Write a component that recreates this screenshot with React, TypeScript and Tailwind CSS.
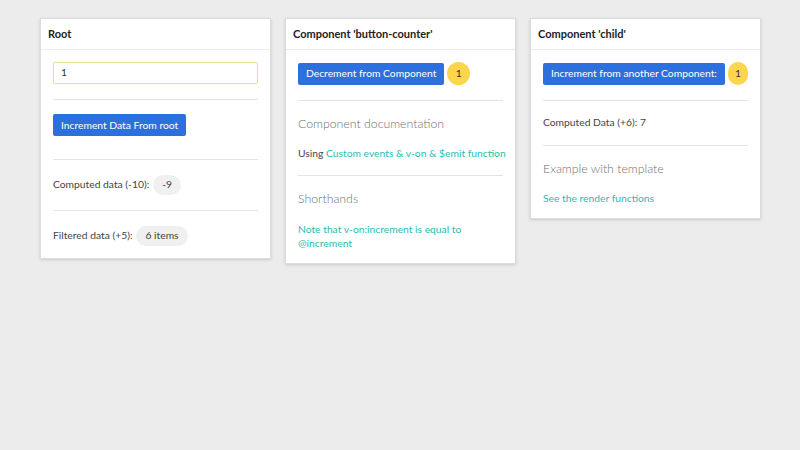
import React from "react";

function Card({ title, children, pb }: { title: string; children: React.ReactNode; pb: string }) {
  return (
    <div className="w-[231px] bg-white border border-[#dcdcdc] shadow-[0_1px_3px_rgba(0,0,0,0.15)] self-start">
      <div className="h-[31px] flex items-center px-[7px] border-b border-[#ececec] text-[11px] font-bold text-[#222]">
        {title}
      </div>
      <div className={"px-[12px] pt-[12px] " + pb}>{children}</div>
    </div>
  );
}

const Hr = ({ className = "" }: { className?: string }) => (
  <div className={"h-px bg-[#e4e4e4] " + className} />
);

function Btn({ children }: { children: React.ReactNode }) {
  return (
    <button className="h-[22px] px-[8px] bg-[#2d6fdc] text-white text-[10.3px] rounded-[2px] leading-none whitespace-nowrap">
      {children}
    </button>
  );
}

function Badge() {
  return (
    <span className="ml-[3px] w-[23px] h-[23px] rounded-full bg-[#fbd64c] text-[10.3px] text-[#333] flex items-center justify-center">
      1
    </span>
  );
}

function Pill({ children }: { children: React.ReactNode }) {
  return (
    <span className="ml-[4px] inline-flex items-center h-[20px] px-[9px] rounded-full bg-[#f0f0f0] text-[10.3px] text-[#444]">
      {children}
    </span>
  );
}

export default function App() {
  return (
    <div
      className="w-[800px] h-[450px] bg-[#ececec] flex gap-[14px] pl-[40px] pt-[18px] text-[#444]"
      style={{ fontFamily: "Lato, 'Open Sans', sans-serif" }}
    >
      <Card title="Root" pb="pb-[12px]">
        <div className="h-[22px] border border-[#ebe08f] rounded-[2px] flex items-center px-[7px] text-[10.3px] text-[#333]">
          1
        </div>
        <Hr className="mt-[15px]" />
        <div className="mt-[14px] flex">
          <Btn>Increment Data From root</Btn>
        </div>
        <Hr className="mt-[23px]" />
        <div className="mt-[15px] h-[20px] flex items-center text-[10.3px]">
          Computed data (-10): <Pill>-9</Pill>
        </div>
        <Hr className="mt-[15px]" />
        <div className="mt-[15px] h-[20px] flex items-center text-[10.3px]">
          Filtered data (+5): <Pill>6 items</Pill>
        </div>
      </Card>
      <Card title="Component 'button-counter'" pb="pb-[13px]">
        <div className="flex items-center">
          <Btn>Decrement from Component</Btn>
          <Badge />
        </div>
        <Hr className="mt-[15px]" />
        <div className="mt-[14px] text-[12.3px] leading-[18px] text-[#707070] font-light">Component documentation</div>
        <div className="mt-[13px] text-[10.3px] leading-[15px] whitespace-nowrap">
          Using <span className="text-[#2cbcb0]">Custom events &amp; v-on &amp; $emit function</span>
        </div>
        <Hr className="mt-[14px]" />
        <div className="mt-[14px] text-[12.3px] leading-[18px] text-[#707070] font-light">Shorthands</div>
        <div className="mt-[14px] text-[10.3px] leading-[14px] text-[#2cbcb0]">
          Note that v-on:increment is equal to
          <br />
          @increment
        </div>
      </Card>
      <Card title="Component 'child'" pb="pb-[12px]">
        <div className="flex items-center">
          <Btn>Increment from another Component:</Btn>
          <Badge />
        </div>
        <Hr className="mt-[15px]" />
        <div className="mt-[14px] text-[10.3px] leading-[15px]">Computed Data (+6): 7</div>
        <Hr className="mt-[15px]" />
        <div className="mt-[14px] text-[12.3px] leading-[18px] text-[#707070] font-light">Example with template</div>
        <div className="mt-[13px] text-[10.3px] leading-[15px] text-[#2cbcb0]">See the render functions</div>
      </Card>
    </div>
  );
}
